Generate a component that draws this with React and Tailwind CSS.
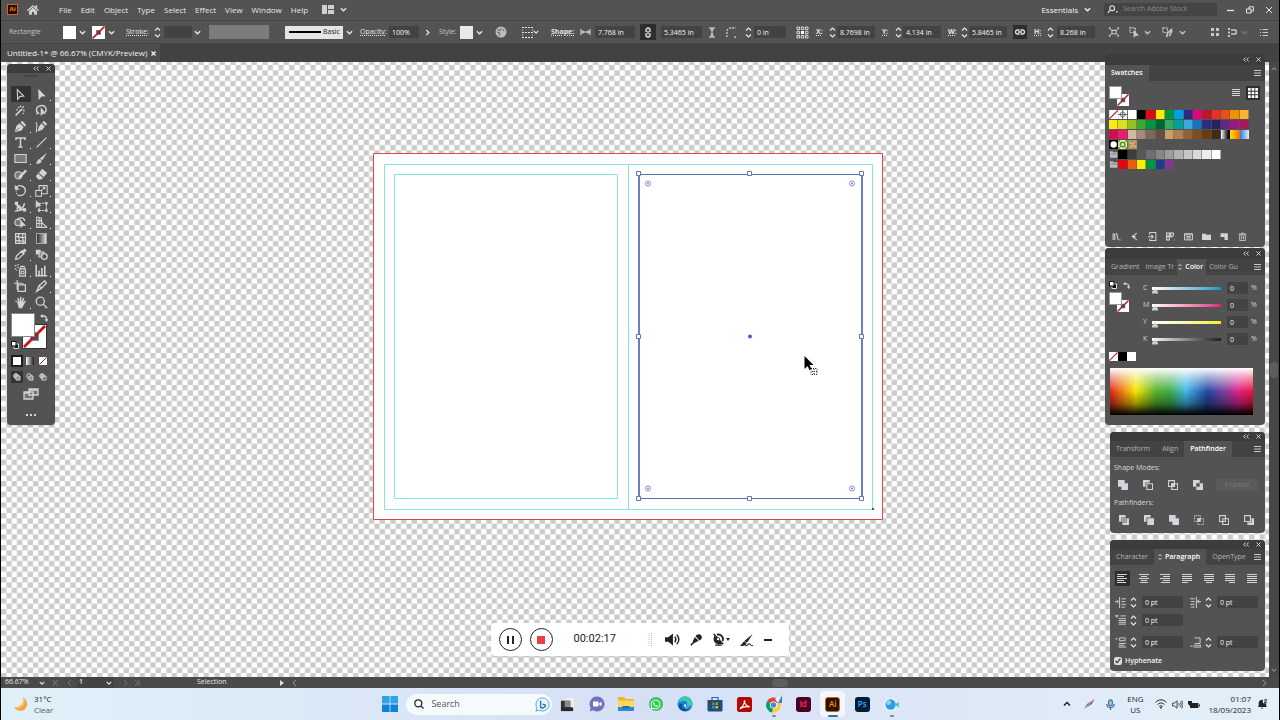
import clsx from "clsx";
import { FaWhatsapp, FaHome } from "react-icons/fa";

const MENUS = ["File", "Edit", "Object", "Type", "Select", "Effect", "View", "Window", "Help"];

function Ico({ children, className = "size-3", box = "0 0 16 16" }) {
  return (
    <svg
      viewBox={box}
      className={clsx("shrink-0", className)}
      fill="none"
      stroke="currentColor"
      strokeWidth="1.3"
      aria-hidden="true"
    >
      {children}
    </svg>
  );
}

function Chevron({ className = "size-[7px]" }) {
  return (
    <Ico className={className} box="0 0 8 8">
      <path d="M1 2.5 4 5.5 7 2.5" strokeWidth="1.5" />
    </Ico>
  );
}

function Stepper({ label }) {
  return (
    <button type="button" aria-label={label} className="flex w-[9px] shrink-0 justify-center text-gray-200">
      <Ico className="h-[11px] w-[7px]" box="0 0 7 11">
        <path d="M1 3.5 3.5 1 6 3.5M1 7.5 3.5 10 6 7.5" strokeWidth="1.2" />
      </Ico>
    </button>
  );
}

function Field({ label, value, className }) {
  return (
    <input
      aria-label={label}
      defaultValue={value}
      className={clsx("h-3 min-w-0 shrink-0 bg-[#434343] pl-[3px] text-[7px] text-gray-100 outline-none", className)}
    />
  );
}

function NoneSwatch({ className, hole = true }) {
  return (
    <svg viewBox="0 0 24 24" className={clsx("shrink-0", className)} aria-hidden="true">
      <rect width="24" height="24" fill="#fff" />
      <path d="M1 23 23 1" stroke="#c4161c" strokeWidth="3" />
      {hole && (
        <>
          <rect x="8" y="8" width="8" height="8" fill="#5a4646" stroke="#777" />
          <path d="M8 16 16 8" stroke="#c4161c" strokeWidth="2" />
        </>
      )}
    </svg>
  );
}

/* ---------- top bars ---------- */

function MenuBar() {
  return (
    <header className="flex h-5 items-center bg-[#535353] pb-[1px] text-[8px] text-gray-200">
      <span className="ml-[6px] grid size-[11px] place-items-center border border-[#c8692a] bg-[#2a0f00] text-[6px] font-bold text-[#ff8a1c]">
        Ai
      </span>
      <button type="button" aria-label="Home" className="ml-[9px] text-[#d0d0d0]">
        <FaHome className="size-3" />
      </button>
      <nav className="ml-5 flex gap-[9px]">
        {MENUS.map((m) => (
          <button type="button" key={m}>{m}</button>
        ))}
      </nav>
      <button type="button" aria-label="Arrange documents" className="ml-[14px] flex items-center gap-[6px]">
        <svg viewBox="0 0 12 9" className="h-[9px] w-3" fill="#d0d0d0" aria-hidden="true">
          <path d="M0 0h5v9H0zM6 0h6v4H6zM6 5h6v4H6z" />
        </svg>
        <Chevron />
      </button>
      <div className="ml-auto flex items-center">
        <button type="button" className="flex items-center gap-[6px] text-gray-100">
          Essentials <Chevron />
        </button>
        <label className="ml-[13px] flex h-[13px] w-[113px] items-center gap-1 bg-[#444] pl-[3px]">
          <Ico className="h-[9px] w-3" box="0 0 14 10">
            <circle cx="6" cy="3.5" r="2.8" />
            <path d="M4 5.5 1 9" />
            <path d="M10 7h3l-1.5 2z" fill="currentColor" stroke="none" />
          </Ico>
          <input
            placeholder="Search Adobe Stock"
            aria-label="Search Adobe Stock"
            className="min-w-0 flex-1 bg-transparent text-[7px] outline-none placeholder:text-[#8a8a8a]"
          />
        </label>
        <div className="ml-[10px] mr-[6px] flex items-center gap-[11px]">
          <button type="button" aria-label="Minimize">
            <Ico className="size-[8px]" box="0 0 8 8"><path d="M0 4.5h7" /></Ico>
          </button>
          <button type="button" aria-label="Restore">
            <Ico className="size-[8px]" box="0 0 8 8">
              <path d="M.5 3h4.5v4H.5zM3 3V.8h4.4V5H5" strokeWidth="1" />
            </Ico>
          </button>
          <button type="button" aria-label="Close">
            <Ico className="size-[8px]" box="0 0 8 8"><path d="m1 1 6 6M7 1 1 7" strokeWidth="1" /></Ico>
          </button>
        </div>
      </div>
    </header>
  );
}

function LinkIcon({ flat }) {
  return (
    <Ico className={flat ? "h-[6px] w-[10px]" : "h-[11px] w-[6px]"} box={flat ? "0 0 10 6" : "0 0 6 11"}>
      {flat ? (
        <path d="M4.5 1H2.5a2 2 0 0 0 0 4h2M5.5 1h2a2 2 0 0 1 0 4h-2M3 3h4" />
      ) : (
        <path d="M1 5V3a2 2 0 0 1 4 0v2M1 6v2a2 2 0 0 0 4 0V6M3 3.5v4" />
      )}
    </Ico>
  );
}

const COORDS = [
  ["X:", "8.7698 in"],
  ["Y:", "4.134 in"],
  ["W:", "5.8465 in"],
];

function ControlBar() {
  return (
    <div className="flex h-6 items-center overflow-hidden border-y border-[#434343] bg-[#535353] text-[7px] text-gray-200">
      <span className="w-[54px] shrink-0 pl-2 text-[#c4c4c4]">Rectangle</span>
      <button type="button" aria-label="Fill" className="ml-2 flex shrink-0 items-center gap-[3px]">
        <span className="size-[13px] bg-white" />
        <Chevron />
      </button>
      <button type="button" aria-label="Stroke colour" className="ml-[6px] flex shrink-0 items-center gap-[3px]">
        <NoneSwatch className="size-[13px]" />
        <Chevron />
      </button>
      <div className="ml-[11px] flex shrink-0 items-center">
        <span className="w-[27px] underline decoration-dotted">Stroke:</span>
        <Stepper label="Stroke step" />
        <Field label="Stroke weight" value="" className="mx-[2px] w-7" />
        <Chevron />
      </div>
      <span className="ml-2 h-[14px] w-[60px] shrink-0 bg-[#7c7c7c]" />
      <button type="button" className="ml-4 flex shrink-0 items-center gap-[3px]">
        <span className="flex h-[13px] w-[58px] items-center gap-[2px] bg-[#e4e4e4] pl-1 text-[#222]">
          <span className="h-[2px] w-8 bg-black" />
          Basic
        </span>
        <Chevron />
      </button>
      <div className="ml-[7px] flex shrink-0 items-center">
        <span className="w-[29px] underline decoration-dotted">Opacity:</span>
        <Field label="Opacity" value="100%" className="w-[30px]" />
        <button type="button" aria-label="Opacity options" className="ml-[5px] -rotate-90">
          <Chevron />
        </button>
      </div>
      <button type="button" className="ml-2 flex shrink-0 items-center gap-[3px]">
        <span className="w-[18px] text-left text-[#c4c4c4]">Style:</span>
        <span className="size-[13px] bg-[#e8e8e8]" />
        <Chevron />
      </button>
      <button type="button" aria-label="Recolor artwork" className="ml-[12px] shrink-0">
        <Ico className="size-[12px]" box="0 0 12 12">
          <circle cx="6" cy="6" r="5.5" fill="#bdbdbd" stroke="none" />
          <path d="M2 3l3 2 1-3M2 6l3 1-1 3" stroke="#5b5b5b" strokeWidth=".9" />
          <circle cx="8.5" cy="4" r="1" fill="#777" stroke="none" />
        </Ico>
      </button>
      <button type="button" aria-label="Align" className="ml-[15px] flex shrink-0 items-center">
        <Ico className="size-[11px]" box="0 0 11 11">
          <path d="M0 .5h11M0 5.5h11M0 10.5h11" strokeDasharray="2 1" strokeWidth="1" />
          <path d="M.5 0v11M10.500 0v11" strokeDasharray="1 1.500" strokeWidth="1" />
        </Ico>
        <Chevron className="size-[6px]" />
      </button>
      <div className="ml-[12px] flex shrink-0 items-center">
        <span className="w-[29px] font-bold underline decoration-dotted">Shape:</span>
        <Ico className="mr-1 h-2 w-[11px]" box="0 0 11 8">
          <path d="M1 1v6M10 1v6M1 4h9M3 2.500v3M8 2.500v3" strokeWidth="1" />
        </Ico>
        <Field label="Shape width" value="7.768 in" className="w-10" />
        <button type="button" aria-label="Link shape size" className="mx-[5px] grid size-4 place-items-center bg-[#2e2e2e]">
          <LinkIcon />
        </button>
        <Field label="Shape height" value="5.3465 in" className="w-[41px]" />
      </div>
      <Ico className="ml-[6px] h-[11px] w-[8px]" box="0 0 8 11">
        <path d="M1 1h6M1 10h6M4 1v9M2.5 3h3M2.5 8h3" strokeWidth="1" />
      </Ico>
      <Ico className="ml-[10px] size-[11px]" box="0 0 12 12">
        <path d="M1 11V5a4 4 0 0 1 4-4h6M11 11h-2" strokeDasharray="2 1.5" strokeWidth="1.2" />
      </Ico>
      <div className="ml-[7px] flex shrink-0 items-center">
        <Stepper label="Corner radius step" />
        <Field label="Corner radius" value="0 in" className="ml-[1px] w-8" />
      </div>
      <Ico className="ml-[10px] size-[13px]" box="0 0 13 13">
        <path d="M1 1h2.5v2.5H1zM5.3 1h2.5v2.5H5.3zM9.5 1H12v2.5H9.5zM1 5.3h2.5v2.5H1zM9.5 5.3H12v2.5H9.5zM1 9.5h2.5V12H1zM5.3 9.5h2.5V12H5.3zM9.5 9.5H12V12H9.5z" strokeWidth=".9" />
        <path d="M5 5h3v3H5z" fill="#fff" stroke="none" />
      </Ico>
      {COORDS.map(([name, value]) => (
        <div key={name} className="ml-[7px] flex shrink-0 items-center">
          <span className="w-3 font-bold underline decoration-dotted">{name}</span>
          <Stepper label={`${name} step`} />
          <Field label={name} value={value} className="w-[38px]" />
        </div>
      ))}
      <button type="button" aria-label="Constrain proportions" className="ml-[6px] grid size-[14px] shrink-0 place-items-center bg-[#2e2e2e]">
        <LinkIcon flat />
      </button>
      <div className="ml-[7px] flex shrink-0 items-center">
        <span className="w-3 font-bold underline decoration-dotted">H:</span>
        <Stepper label="H step" />
        <Field label="H" value="8.268 in" className="ml-[2px] w-[38px]" />
      </div>
      <div className="ml-auto mr-[11px] flex shrink-0 items-center text-[#c8c8c8]">
        <Ico className="size-[10px]" box="0 0 12 12">
          <path d="M3.5 4h5v4h-5z" />
          <path d="M0 1l3.5 3M12 1 8.5 4M0 11l3.5-3M12 11 8.5 8" strokeWidth="1.2" />
          <path d="M0 3V1h2M12 3V1h-2M0 9v2h2M12 9v2h-2" strokeWidth="1.2" />
        </Ico>
        <div className="ml-[10px] flex items-center gap-1">
          <Ico className="size-[11px]" box="0 0 12 12">
            <path d="M1 1h6v5H1z" strokeDasharray="2 1" />
            <path d="M5 3v9l2.500-2.500H11z" fill="currentColor" stroke="none" />
          </Ico>
          <Chevron />
        </div>
        <div className="ml-[11px] flex items-center gap-[6px]">
          <Ico className="size-[11px]" box="0 0 12 12">
            <path d="M1 1h5v5H1z" strokeDasharray="2 1" />
            <path d="m5 11 1-4 5-5M8 10l3-6" strokeWidth="1.8" />
          </Ico>
          <Chevron />
        </div>
        <svg viewBox="0 0 8 8" className="ml-[25px] size-2" fill="currentColor" aria-hidden="true">
          <path d="M0 0h3v3H0zM5 0h3v3H5zM0 5h3v3H0zM5 5h3v3H5z" />
        </svg>
        <div className="ml-[9px] flex items-center gap-1">
          <Ico className="size-[9px]" box="0 0 9 9">
            <path d="M1 0v2M1 3.500v2M1 7v2" strokeWidth="2" />
            <path d="M3 2h3.500a2 2 0 0 1 0 4H3" strokeWidth="1.500" />
          </Ico>
          <Chevron className="size-[7px] text-[#777]" />
        </div>
        <Ico className="ml-3 size-2" box="0 0 8 8">
          <path d="M2.5 1.500H8M2.5 4.500H8M2.5 7.500H8M0 1.500h1M0 4.500h1M0 7.500h1" strokeWidth="1" />
        </Ico>
      </div>
    </div>
  );
}

function TabBar() {
  return (
    <div className="flex h-[18px] bg-[#424242] text-[8px] text-gray-100">
      <div className="flex w-[159px] items-center justify-between bg-[#4d4d4d] pl-[6px] pr-1">
        Untitled-1* @ 66.67% (CMYK/Preview)
        <button type="button" aria-label="Close document">
          <Ico className="size-[5px]" box="0 0 5 5"><path d="m.5.5 4 4M4.5.5l-4 4" /></Ico>
        </button>
      </div>
    </div>
  );
}

/* ---------- tool box ---------- */

const F = { fill: "currentColor", stroke: "none" };

const TOOLS = [
  ["Selection", <path key="a" d="m4 2 8 8-4.5.3L4.5 14z" />],
  ["Direct selection", <path key="a" {...F} d="m4 1 9 9-5 .5L4.5 15z" />],
  ["Magic wand", <path key="a" d="m2 14 8-8M8 2v2M12 3l-1.5 1.5M13 8h-2M5 4l1 1M12 12l-1-1M3 7h1.5" strokeWidth="1.9" />],
  ["Lasso", <g key="a"><path d="M5 12C0 9 1 3 7 2s8 4 6 8M5 12c-1-2-3-1-3 1" strokeWidth="1.7" /><path {...F} d="m7 4 7 8-4 0-3 3z" /></g>],
  ["Pen", <g key="a"><path {...F} d="M10 1 15 6l-2 2-5-5zM7 4l5 5-3 4-8 2 2-8z" /><path d="m2 14 4-4" stroke="#535353" strokeWidth="1" /></g>],
  ["Curvature", <g key="a"><path {...F} d="M11 1 15 5l-2 2-4-4zM8 4l4 4-3 4-6 2 2-6z" /><path d="M1 3c4 3-1 8 1 12" /></g>],
  ["Type", <path key="a" d="M2.5 5V2.500h11V5M8 2.500v11M5.500 13.500h5" strokeWidth="1.900" />],
  ["Line", <path key="a" d="M2 14 14 2" strokeWidth="1.600" />],
  ["Rectangle", <path key="a" d="M1 3h14v10H1z" fill="#7a7a7a" />],
  ["Paintbrush", <path key="a" {...F} d="M15 1 8.500 10.500 6 8zM5.500 8.500 8 11c0 3-4 4-7 3 2-1 1.500-5 4.500-5.500z" />],
  ["Shaper", <g key="a"><circle cx="5.5" cy="9" r="4.5" fill="#777" /><path d="m6 12 9-9" strokeWidth="3" /></g>],
  ["Eraser", <g key="a"><path {...F} d="m9 1 6 5-7 8H4L1 10z" /><path d="m4.5 6.500 5.500 5" stroke="#535353" /></g>],
  ["Rotate", <g key="a"><path d="M3 4c4-4 11-1 11 4s-5 7-8 6" strokeWidth="1.600" /><path d="M6 14c-3-1-4-4-3-6" strokeDasharray="1.500 1.500" /><path {...F} d="M1 1v6h6z" /></g>],
  ["Scale", <path key="a" d="M1 8h7v7H1zM5 8V2h10v10H8M8 8l4-4M9.500 4H12v2.500" />],
  ["Width", <g key="a"><path d="M1 14 14 11M2 4l6 8M4 12c0-6 3-6 4-3s4 0 5-5" strokeWidth="1.800" /><path {...F} d="M1 2h4v4H1zM11 10h4v4h-4z" /></g>],
  ["Free transform", <g key="a"><path d="M5 4h9v9H5z" strokeDasharray="2.500 1" /><path {...F} d="m1 0 7 7-4 0-3 3zM12.500 2.500h3v3h-3zM12.500 11.500h3v3h-3zM3.500 11.500h3v3h-3z" /></g>],
  ["Shape builder", <g key="a"><circle cx="5" cy="8" r="4" fill="#777" /><path d="M4 4c2-3 9-2 9 2" strokeWidth="1.600" /><path {...F} d="m8 5 7 7-4 0-3 3z" /></g>],
  ["Perspective grid", <path key="a" d="M2 1v13h13M2 1l6 2v11M5 2v12M2 5l7 1M2 9l9 1M8 8l7 6" />],
  ["Mesh", <path key="a" d="M2 2h12v12H2zM2 6c4-2 8 3 12 0M2 11c4-2 8 2 12 0M6 2c-2 4 2 8 0 12M11 2c-2 4 2 8 0 12" strokeWidth="1.500" />],
  ["Gradient", "gradient"],
  ["Eyedropper", <g key="a"><path d="M2 14 3 10l6-6 3 3-6 6z" strokeWidth="1.500" /><path {...F} d="m9 3 1.500 0L13 .5 15.500 3 13 5.500V7l-1 1-4-4z" /></g>],
  ["Blend", <g key="a"><path {...F} d="M1 2h6v6H1z" /><path d="M5 5h6v6H5z" fill="#888" /><circle cx="11.5" cy="10.500" r="3.500" fill="#535353" strokeWidth="1.600" /></g>],
  ["Symbol sprayer", <g key="a"><path d="M7 6h7v9H7zM8.500 6V3h4v3" strokeWidth="1.500" /><circle cx="10.5" cy="10.500" r="1.800" /><path d="M1 2h2M4 4h2M1 6h2M4 1h2M3 8h1" /></g>],
  ["Column graph", <path key="a" d="M1.500 1v13.500H15M5 14V8M8.500 14V5M12 14V2" strokeWidth="2" />],
  ["Artboard", <path key="a" d="M4 0v12M0 4h10M5 6h9v8H5zM11 4v2" strokeWidth="1.500" />],
  ["Slice", <path key="a" d="m2 14 3-7 7-6 2 3-6 6zM5 7l3 3" strokeWidth="1.600" />],
  ["Hand", <path key="a" {...F} d="M4 8 1 6.500 2.500 5.500 5 8 4 2.500l1.500-.5 1.500 5L7.500 1H9l.500 6 1.500-5 1.500.5L11.500 8l2-2.500 1.200.7L11 13l-1 2H6z" />],
  ["Zoom", <path key="a" d="M10.500 10.500 15 15M11.500 6.500a5 5 0 1 1-10 0 5 5 0 0 1 10 0z" strokeWidth="1.600" />],
];

const NO_FLYOUT = ["Selection", "Magic wand", "Lasso", "Curvature", "Mesh", "Gradient", "Blend", "Artboard", "Zoom"];

function PanelGrip({ tall }) {
  return (
    <div className={clsx("flex items-center justify-end gap-[7px] bg-[#3c3c3c] pr-1 text-gray-300", tall ? "h-[11px]" : "h-[9px]")}>
      <button type="button" aria-label="Collapse">
        <Ico className="h-[5px] w-[6px]" box="0 0 6 5">
          <path d="M2.5.5.8 2.500l1.700 2M5.500.5 3.800 2.500l1.700 2" strokeWidth="1" />
        </Ico>
      </button>
      <button type="button" aria-label="Close panel">
        <Ico className="size-[5px]" box="0 0 5 5"><path d="m.5.5 4 4M4.500.5l-4 4" strokeWidth="1" /></Ico>
      </button>
    </div>
  );
}

function SwapIcon({ className = "size-2" }) {
  return (
    <Ico className={className} box="0 0 8 8">
      <path d="M2 2h1.500c2 0 3 1 3 3v1" />
      <path {...F} d="M0 2 2.800 0v4zM6.500 8 4.500 5.200h4z" />
    </Ico>
  );
}

function DefaultIcon() {
  return (
    <svg viewBox="0 0 8 8" className="size-2" aria-hidden="true">
      <path d="M3 3h4.500v4.500H3z" fill="#111" stroke="#ddd" />
      <path d="M.5.5H5V5H.5z" fill="#fff" stroke="#111" />
    </svg>
  );
}

function ToolBox() {
  return (
    <aside className="absolute left-[6px] top-[2px] w-12 overflow-hidden rounded-sm bg-[#535353] pb-[6px] text-[#d4d4d4] shadow-sm">
      <PanelGrip />
      <div className="mx-auto mt-[2px] h-[2px] w-3 bg-[#454545]" />
      <div className="mt-[9px] grid grid-cols-2 gap-x-[1px] px-1">
        {TOOLS.map(([name, art], i) => (
          <button
            type="button"
            key={name}
            aria-label={name}
            className={clsx("relative grid h-4 place-items-center", i === 0 && "bg-[#333]")}
          >
            {art === "gradient" ? (
              <span className="size-[11px] border border-[#aaa] bg-linear-to-r from-[#333] to-[#ddd]" />
            ) : (
              <Ico className="size-[13px]">{art}</Ico>
            )}
            {!NO_FLYOUT.includes(name) && <span className="absolute bottom-[1px] right-0 size-[1px] bg-white" />}
          </button>
        ))}
      </div>
      <div className="relative mx-1 mt-[3px] h-9">
        <NoneSwatch className="absolute left-3 top-[12px] size-[23px] ring-1 ring-[#333]" />
        <button type="button" aria-label="Fill colour" className="absolute left-0 top-0 size-6 border border-[#888] bg-white" />
        <button type="button" aria-label="Swap fill and stroke" className="absolute left-[29px] top-[1px]">
          <SwapIcon />
        </button>
        <button type="button" aria-label="Default fill and stroke" className="absolute bottom-0 left-0">
          <DefaultIcon />
        </button>
      </div>
      <div className="mx-1 mt-[6px] flex gap-[1px]">
        <button type="button" aria-label="Color" className="grid size-3 place-items-center bg-[#1d1d1d]">
          <span className="size-2 bg-white" />
        </button>
        <button type="button" aria-label="Gradient fill" className="grid size-3 place-items-center">
          <span className="size-2 bg-linear-to-r from-white to-[#222]" />
        </button>
        <button type="button" aria-label="None" className="grid size-3 place-items-center">
          <NoneSwatch className="size-2" hole={false} />
        </button>
      </div>
      <div className="mx-1 mt-1 flex gap-[1px]">
        {["Draw normal", "Draw behind", "Draw inside"].map((name, i) => (
          <button key={name} type="button" aria-label={name} className={clsx("grid size-3 place-items-center", i === 0 && "bg-[#333]")}>
            <Ico className="size-2" box="0 0 8 8">
              <circle cx="3" cy="3" r="2.3" fill={i === 1 ? "none" : "#aaa"} strokeWidth="1" />
              <path d="M3 3h4v4H3z" fill={i === 2 ? "none" : "#888"} strokeWidth="1" />
            </Ico>
          </button>
        ))}
      </div>
      <button type="button" aria-label="Screen mode" className="mx-auto mt-[5px] block">
        <Ico className="h-3 w-4" box="0 0 16 12">
          <path d="M1 4h9v7H1zM6 1h9v6H6z" fill="#777" />
          <path d="M1 5h6M6 2h9" />
        </Ico>
      </button>
      <button type="button" aria-label="Edit toolbar" className="mx-auto mt-[11px] flex h-2 items-center gap-[2px]">
        <span className="size-[2px] bg-gray-300" />
        <span className="size-[2px] bg-gray-300" />
        <span className="size-[2px] bg-gray-300" />
      </button>
    </aside>
  );
}

/* ---------- canvas ---------- */

function Checker() {
  return (
    <svg className="absolute inset-0 size-full" aria-hidden="true">
      <defs>
        <pattern id="checker" width="10.667" height="10.667" patternUnits="userSpaceOnUse" x="0" y="3">
          <rect width="10.667" height="10.667" fill="#fff" />
          <path d="M0 0h5.333v5.333H0zM5.333 5.333h5.334v5.334H5.333z" fill="#cbcbcb" />
        </pattern>
      </defs>
      <rect width="100%" height="100%" fill="url(#checker)" />
    </svg>
  );
}

const HANDLES = [
  [266, 20], [377, 20], [489, 20],
  [266, 183], [489, 183],
  [266, 345], [377, 345], [489, 345],
];
const CORNERS = [[275, 31], [479, 31], [275, 336], [479, 336]];

function Artboard() {
  return (
    <svg viewBox="0 0 512 368" className="absolute left-[372px] top-[91px] h-[368px] w-[512px]" fill="none" aria-label="Artboard">
      <path d="M.5.5h509.500v366.500H.5z" fill="#fff" stroke="none" />
      <path d="M.5.5h509v366H.5z" stroke="#e2434d" />
      <path d="M11.500 11.500h488v345h-488zM255.500 11.500v345M21.500 21.500h223v324h-223z" stroke="#86e6dc" />
      <path d="M499 355h2v2h-2z" fill="#555" />
      <path d="M266 21.500h223v324H266z" stroke="#5470b4" />
      <path d="M266 21v325M489 21v325" stroke="#5470b4" strokeWidth="1.500" />
      {HANDLES.map(([x, y]) => (
        <path key={`${x}-${y}`} d={`M${x - 2.5} ${y - 1.5}h4v4h-4z`} fill="#fff" stroke="#6376ad" />
      ))}
      {CORNERS.map(([x, y]) => (
        <g key={`${x}-${y}`} stroke="#6a7cc0">
          <circle cx={x} cy={y - 0.5} r="2.600" strokeWidth=".8" />
          <circle cx={x} cy={y - 0.5} r="1" fill="#6a7cc0" stroke="none" />
        </g>
      ))}
      <circle cx="377" cy="183.500" r="2" fill="#3f66c4" />
      <path d="M431.500 203v13l3-3 2 4 2-1-2-4h4z" fill="#000" />
      <path d="M438 215.500h6v6h-6z" stroke="#333" strokeDasharray="1 1" />
      <path d="M439 218.500h5M441 216v5" stroke="#333" strokeDasharray="1 1" />
    </svg>
  );
}

function Recorder() {
  return (
    <div className="absolute inset-x-0 bottom-[21px] flex justify-center pl-[9px]">
      <div className="flex h-[33px] w-[298px] items-center rounded-sm bg-white pl-2 pr-[17px] text-[#222] shadow">
        <button type="button" aria-label="Pause" className="grid size-[23px] place-items-center rounded-full border border-[#222]">
          <span className="flex gap-[3px]">
            <span className="h-2 w-[2px] bg-[#222]" />
            <span className="h-2 w-[2px] bg-[#222]" />
          </span>
        </button>
        <button type="button" aria-label="Stop" className="ml-2 grid size-[23px] place-items-center rounded-full border border-[#222]">
          <span className="size-2 bg-[#e8423f]" />
        </button>
        <time className="ml-[21px] font-[Roboto,sans-serif] text-[11px]">00:02:17</time>
        <svg viewBox="0 0 6 14" className="ml-auto h-[14px] w-[6px]" aria-hidden="true">
          <path d="M1 0v14M3.500 0v14" stroke="#a9cbdc" strokeDasharray="1 1" />
        </svg>
        <div className="ml-[11px] flex items-center gap-[10px]">
          <button type="button" aria-label="Speaker">
            <Ico className="size-[15px]">
              <path {...F} d="M0 5.500h3.500L8.500 1.500v13L3.500 10.500H0z" />
              <path d="M10.500 5c1.500 2 1.500 4 0 6M12.500 3c3 3 3 7 0 10" strokeWidth="1.500" />
            </Ico>
          </button>
          <button type="button" aria-label="Microphone">
            <Ico className="size-[12px]">
              <path {...F} d="M7.500 3C9 0 13-.5 15 2s0 6-2.500 6.500zM6.500 4l5 5-5.500 3L3.500 9.500z" />
              <path d="m5.500 10.500-4.500 4.500" strokeWidth="2" />
            </Ico>
          </button>
          <button type="button" aria-label="Webcam" className="flex items-center gap-[1px]">
            <Ico className="size-[13px]">
              <path {...F} d="M3 3 13 13c-5 3-12-1-11-7z" />
              <path d="M6 2c5-1 9 3 7 8" strokeWidth="2.200" />
              <path d="M2 1 14 14M4 15h8" strokeWidth="1.600" />
              <circle cx="7.500" cy="7.500" r="2" fill="#fff" strokeWidth="1" />
            </Ico>
            <svg viewBox="0 0 4 3" className="h-[3px] w-1" fill="#222" aria-hidden="true"><path d="M0 0h4L2 3z" /></svg>
          </button>
          <button type="button" aria-label="Draw">
            <Ico className="size-[14px]">
              <path {...F} d="M14.500 1 8 11 5 9zM5 9.500 7.500 12C6 15 3 15 0 14.500c2-1 3-4 5-5z" />
              <path d="M6 14.500c3 1 3-3 5-2s0 2 4 2" strokeWidth="1.200" />
            </Ico>
          </button>
          <button type="button" aria-label="Minimize recorder" className="grid h-4 w-2 place-items-center">
            <span className="h-[2px] w-2 bg-[#222]" />
          </button>
        </div>
      </div>
    </div>
  );
}

/* ---------- right panels ---------- */

function Panel({ tabs, active, tall, tight, className, children }) {
  return (
    <section className={clsx("overflow-hidden rounded-sm bg-[#535353] text-[7px] text-gray-300", className)}>
      <PanelGrip tall={tall} />
      <div className={clsx("flex h-4 items-stretch bg-[#434343]", tight && "pl-[3px]")} role="tablist">
        {tabs.map((t) => (
          <button
            type="button"
            role="tab"
            key={t}
            aria-selected={t === active}
            className={clsx(
              "flex items-center overflow-hidden whitespace-nowrap",
              tight ? "px-[3px]" : "px-[6px]",
              t === active ? "gap-[3px] bg-[#535353] font-semibold text-white" : "text-[#b4b4b4]",
            )}
          >
            {t === active && (t === "Color" || t === "Paragraph") && (
              <Ico className="-ml-[2px] h-[6px] w-1" box="0 0 4 6">
                <path d="M.5 2 2 .5 3.500 2M.5 4 2 5.500 3.500 4" strokeWidth=".8" />
              </Ico>
            )}
            {t}
          </button>
        ))}
        <button type="button" aria-label="Panel menu" className="ml-auto mr-1">
          <Ico className="h-[6px] w-[7px]" box="0 0 7 6"><path d="M0 .5h7M0 3h7M0 5.500h7" strokeWidth=".9" /></Ico>
        </button>
      </div>
      {children}
    </section>
  );
}

function FillStroke() {
  return (
    <div className="relative size-5">
      <NoneSwatch className="absolute bottom-0 right-0 size-3" />
      <span className="absolute left-0 top-0 size-[13px] border border-[#999] bg-white" />
    </div>
  );
}

const SWATCHES = [
  "#ffffff", "#000000", "#e30613", "#ffed00", "#00963f", "#00a0e3", "#312783", "#e6007e", "#be1622", "#e5332a", "#e94e1b", "#f39200", "#f9b233",
  "#fcea10", "#d9e021", "#95c11f", "#3aaa35", "#009640", "#006633", "#2fac66", "#00a19a", "#36a9e1", "#1d71b8", "#2d2e83", "#29235c", "#662483", "#951b81", "#a3195b",
  "#d60b52", "#e71d73", "#cbbba0", "#a48a7b", "#7b6a58", "#634e42", "#ca9e67", "#b17f4a", "#936037", "#7d4e24", "#683c11", "#432918",
];
const GREYS = ["#000000", "#3c3c3b", "#575756", "#706f6f", "#878787", "#9d9d9c", "#b2b2b2", "#c6c6c6", "#dadada", "#ededed", "#ffffff"];
const BRIGHTS = ["#e30613", "#e95d0f", "#ffed00", "#009640", "#24388e", "#7d3a90"];

function Swatch({ color }) {
  return (
    <button type="button" aria-label={`Swatch ${color}`} className="h-[9px] border-r border-[#535353]/50" style={{ background: color }} />
  );
}

function Folder() {
  return (
    <svg viewBox="0 0 10 9" className="h-[9px] w-full" fill="#b8bcc0" aria-hidden="true">
      <path d="M1 1h3l1 1h4v6H1z" />
      <path d="M2 4h6" stroke="#777" />
    </svg>
  );
}

const FOOTER = [
  ["Libraries", <path key="a" d="M2 2v12M5 2v12M8 2l3 12M13 14h2" strokeWidth="1.900" />],
  ["Share", <path key="a" d="M12 2 4 8l8 6M8 5v6M5 8h5" strokeWidth="1.900" />],
  ["Add to library", <path key="a" d="M3 5V1h11v14H3v-3M0 8.500h8M6 5l3 3.500L6 12" strokeWidth="1.800" />],
  ["Swatch kinds", <path key="a" d="M1 2h5v5H1zM8 2h5v5H8zM1 9h5v5H1zM8 9h3M14 14h1" strokeWidth="1.800" />],
  ["Options", <path key="a" d="M1 3h14v11H1zM1 5h14M5 8h6v3H5z" strokeWidth="1.700" />],
  ["New group", <path key="a" {...F} d="M0 3h6l2 2h8v9H0z" />],
  ["New swatch", <path key="a" {...F} d="M1 2h13v12H8V9H1z" />],
  ["Delete", <path key="a" d="M3 5h10v10H3zM1 3.500h14M6 2h4M6.500 7v6M9.500 7v6" strokeWidth="1.500" />],
];

function SwatchesPanel() {
  return (
    <Panel tabs={["Swatches"]} active="Swatches" tall className="w-[160px] pb-[6px]">
      <div className="flex items-start justify-between pl-1 pr-[5px] pt-[5px]">
        <FillStroke />
        <div className="flex items-center gap-[3px]">
          <button type="button" aria-label="List view" className="grid size-[14px] place-items-center">
            <Ico className="size-2" box="0 0 8 8"><path d="M0 .5h8M0 2.500h8M0 4.500h8M0 6.500h8" strokeWidth="1" /></Ico>
          </button>
          <button type="button" aria-label="Thumbnail view" className="grid size-[14px] place-items-center bg-[#2e2e2e]">
            <svg viewBox="0 0 11 11" className="size-[10px]" fill="#fff" aria-hidden="true">
              <path d="M0 0h3v3H0zM4 0h3v3H4zM8 0h3v3H8zM0 4h3v3H0zM4 4h3v3H4zM8 4h3v3H8zM0 8h3v3H0zM4 8h3v3H4zM8 8h3v3H8z" />
            </svg>
          </button>
        </div>
      </div>
      <div className="ml-1 mt-1 grid w-[140px] grid-cols-15 gap-y-[1px]">
        <NoneSwatch className="h-[9px] w-full" hole={false} />
        <svg viewBox="0 0 9 9" className="h-[9px] w-full" aria-hidden="true">
          <path d="M0 0h9v9H0z" fill="#fff" />
          <circle cx="4.500" cy="4.500" r="2.500" stroke="#444" strokeWidth=".7" fill="none" />
          <path d="M4.500 0v9M0 4.500h9" stroke="#444" strokeWidth=".8" fill="none" />
        </svg>
        {SWATCHES.map((c) => (
          <Swatch key={c} color={c} />
        ))}
        <span className="h-[9px] bg-linear-to-r from-white to-black" />
        <span className="h-[9px] bg-linear-to-r from-[#ffe000] to-[#ee6a00]" />
        <span className="h-[9px] bg-linear-to-r from-[#2b7fd0] to-[#dceefb]" />
        <svg viewBox="0 0 9 9" className="h-[9px] w-full" aria-hidden="true">
          <path d="M0 0h9v9H0z" />
          <circle cx="4.500" cy="4.500" r="3.200" fill="#fff" />
        </svg>
        <svg viewBox="0 0 9 9" className="h-[9px] w-full" aria-hidden="true">
          <path d="M0 0h9v9H0z" fill="#e7efb8" />
          <circle cx="4.500" cy="4.500" r="2.300" fill="none" stroke="#4e9a2c" strokeWidth="1.600" />
          <path d="M0 0h2v2H0zM7 0h2v2H7zM0 7h2v2H0zM7 7h2v2H7z" fill="#6fae34" />
        </svg>
        <svg viewBox="0 0 9 9" className="h-[9px] w-full" aria-hidden="true">
          <path d="M0 0h9v9H0z" fill="#b98d5f" />
          <path d="M1 2l3 2 3-3M2 8l2-3 4 2" stroke="#e6c99a" fill="none" />
        </svg>
        <span className="col-span-12" />
        <Folder />
        {GREYS.map((c) => (
          <Swatch key={c} color={c} />
        ))}
        <span className="col-span-3" />
        <Folder />
        {BRIGHTS.map((c) => (
          <Swatch key={c} color={c} />
        ))}
      </div>
      <div className="mx-[7px] mt-[63px] flex justify-between pr-[11px]">
        {FOOTER.map(([name, art]) => (
          <button type="button" key={name} aria-label={name}>
            <Ico className="size-[9px]">{art}</Ico>
          </button>
        ))}
      </div>
    </Panel>
  );
}

const INKS = [
  ["C", "to-[#0095c8]"],
  ["M", "to-[#d6247f]"],
  ["Y", "to-[#f5f000]"],
  ["K", "to-[#222]"],
];

function ColorPanel() {
  return (
    <Panel tabs={["Gradient", "Image Tr", "Color", "Color Gu"]} active="Color" tall tight className="w-[160px] pb-[10px]">
      <div className="flex pl-1 pr-2 pt-[6px]">
        <div className="w-[34px]">
          <div className="mb-[3px] flex items-center gap-[6px]">
            <button type="button" aria-label="Default colours"><DefaultIcon /></button>
            <button type="button" aria-label="Swap colours"><SwapIcon className="size-[7px]" /></button>
          </div>
          <FillStroke />
        </div>
        <div className="flex flex-1 flex-col gap-[3px]">
          {INKS.map(([ink, to]) => (
            <label key={ink} className="flex h-[14px] items-center">
              <span className="w-[9px]">{ink}</span>
              <input
                type="range"
                defaultValue="0"
                aria-label={ink}
                className={clsx(
                  "h-[10px] w-[69px] appearance-none bg-linear-to-r from-white bg-[length:100%_3px] bg-[position:0_4px] bg-no-repeat [&::-webkit-slider-thumb]:mt-[6px] [&::-webkit-slider-thumb]:h-[5px] [&::-webkit-slider-thumb]:w-[6px] [&::-webkit-slider-thumb]:appearance-none [&::-webkit-slider-thumb]:bg-[#ccc] [&::-webkit-slider-thumb]:[clip-path:polygon(50%_0,100%_60%,100%_100%,0_100%,0_60%)]",
                  to,
                )}
              />
              <Field label={`${ink} value`} value="0" className="ml-[6px] w-[21px]" />
              <span className="ml-[3px]">%</span>
            </label>
          ))}
        </div>
      </div>
      <div className="ml-1 mt-[6px] flex">
        <NoneSwatch className="size-[9px]" hole={false} />
        <span className="size-[9px] bg-black" />
        <span className="size-[9px] bg-white" />
      </div>
      <div className="ml-[5px] mr-3 mt-[7px] h-[47px] bg-[linear-gradient(90deg,#e3211d,#f5e500_18%,#57b02c_32%,#3fae49_42%,#3fb8e6_53%,#2447a5_68%,#7a3fa0_80%,#e0218a_90%,#ea1238)]">
        <div className="h-full bg-[linear-gradient(180deg,#fff,rgba(255,255,255,0.6)_18%,transparent_50%,rgba(0,0,0,0.35)_75%,#000)]" />
      </div>
    </Panel>
  );
}

const MODES = [
  ["Unite", <path key="a" {...F} d="M0 0h8v4h4v8H4V8H0z" />],
  ["Minus front", <g key="a"><path {...F} d="M0 0h8v3H3v5H0z" /><path d="M4.500 4.500h7v7h-7z" /></g>],
  ["Intersect", <g key="a"><path d="M.7.7h7v7h-7zM4.500 4.500h7v7h-7z" /><path {...F} d="M4 4h4v4H4z" /></g>],
  ["Exclude", <path key="a" {...F} fillRule="evenodd" d="M0 0h8v4h4v8H4V8H0zM4 4v4h4V4z" />],
];
const FINDERS = [
  ["Divide", <g key="a"><path {...F} d="M0 0h8v3H3v5H0zM9 4h3v8H4V9h5z" /><path d="M4.500 4.500h3v3h-3z" /></g>],
  ["Trim", <g key="a"><path {...F} d="M0 0h8v3H3v5H0zM4 4h8v8H4z" /></g>],
  ["Merge", <path key="a" {...F} d="M0 0h8v4h4v8H4V8H0z" />],
  ["Crop", <g key="a"><path d="M.7.7h7v7h-7zM4.500 4.500h7v7h-7z" strokeDasharray="1 1" /><path {...F} d="M4 4h4v4H4z" /></g>],
  ["Outline", <path key="a" d="M.7.7h7v7h-7zM4.500 4.500h7v7h-7z" />],
  ["Minus back", <g key="a"><path d="M.7.7h7v7h-7z" /><path {...F} d="M9 4h3v8H4V9h5z" /></g>],
];

function PathfinderPanel() {
  return (
    <Panel tabs={["Transform", "Align", "Pathfinder"]} active="Pathfinder" className="w-[155px] pb-[7px]">
      <div className="px-1 pt-[6px]">
        <h3 className="h-[10px] leading-[10px]">Shape Modes:</h3>
        <div className="mt-[5px] flex h-[14px] items-center pl-1">
          <div className="flex gap-[15px]">
            {MODES.map(([name, art]) => (
              <button type="button" key={name} aria-label={name}>
                <Ico className="size-[10px]" box="0 0 12 12">{art}</Ico>
              </button>
            ))}
          </div>
          <button type="button" disabled className="ml-auto mr-[3px] h-3 w-[42px] bg-[#5a5a5a] text-[#777]">Expand</button>
        </div>
        <h3 className="mt-[6px] h-[10px] leading-[10px]">Pathfinders:</h3>
        <div className="mt-[6px] flex h-3 items-center gap-[15px] pl-[5px]">
          {FINDERS.map(([name, art]) => (
            <button type="button" key={name} aria-label={name}>
              <Ico className="size-[10px]" box="0 0 12 12">{art}</Ico>
            </button>
          ))}
        </div>
      </div>
    </Panel>
  );
}

const ALIGNS = [
  ["Align left", "M0 1.500h10M0 3.500h7M0 5.500h10M0 7.500h7M0 9.500h9"],
  ["Align center", "M0 1.500h10M2 3.500h6M0 5.500h10M2 7.500h6M1 9.500h8"],
  ["Align right", "M0 1.500h10M3 3.500h7M0 5.500h10M3 7.500h7M1 9.500h9"],
  ["Justify left", "M0 1.500h10M0 3.500h10M0 5.500h10M0 7.500h10M0 9.500h6"],
  ["Justify center", "M0 1.500h10M0 3.500h10M0 5.500h10M0 7.500h10M2 9.500h6"],
  ["Justify right", "M0 1.500h10M0 3.500h10M0 5.500h10M0 7.500h10M4 9.500h6"],
  ["Justify all", "M0 1.500h10M0 3.500h10M0 5.500h10M0 7.500h10M0 9.500h10"],
];

function Indent({ label, d }) {
  return (
    <div className="flex items-center">
      <Ico className="mr-[3px] size-[11px]" box="0 0 12 12"><path d={d} strokeWidth="1" /></Ico>
      <Stepper label={`${label} step`} />
      <Field label={label} value="0 pt" className="ml-1 w-[41px]" />
    </div>
  );
}

function ParagraphPanel() {
  return (
    <Panel tabs={["Character", "Paragraph", "OpenType"]} active="Paragraph" className="w-[155px] pb-[4px]">
      <div className="flex justify-between px-[5px] pt-[6px]">
        {ALIGNS.map(([name, d], i) => (
          <button type="button" key={name} aria-label={name} className={clsx("grid size-[15px] place-items-center", i === 0 && "bg-[#2e2e2e]")}>
            <Ico className="size-[11px]" box="0 0 11 11"><path d={d} strokeWidth="1" /></Ico>
          </button>
        ))}
      </div>
      <div className="mt-[10px] grid grid-cols-2 gap-y-[6px] pl-[5px]">
        <Indent label="Left indent" d="M0 5h3M2 3l2 2-2 2M5 0v12M7 2h5M7 5h4M7 8h5M7 11h4" />
        <Indent label="Right indent" d="M0 2h5M1 5h4M0 8h5M1 11h4M7 0v12M12 5H8M10 3 8 5l2 2" />
        <Indent label="First line indent" d="M0 1h4M2 0v3M6 1h6M4 4h8M4 6h8M4 8h8M4 10h8" />
      </div>
      <div className="mt-[10px] grid grid-cols-2 pl-[5px]">
        <Indent label="Space before" d="M0 2h3M5 1h6v3H5zM4 7h8M4 9h6M4 11h8" />
        <Indent label="Space after" d="M5 1h6v6H5M0 10h3M4 9h8v2H4" />
      </div>
      <label className="mt-2 flex items-center gap-[3px] pl-1 font-semibold text-gray-100">
        <input type="checkbox" defaultChecked className="size-2 accent-[#dcdcdc]" />
        Hyphenate
      </label>
    </Panel>
  );
}

function Workspace() {
  return (
    <main className="flex flex-1">
      <div className="relative flex-1">
        <Checker />
        <Artboard />
        <ToolBox />
        <div className="absolute -top-2 right-1 flex flex-col items-end gap-[7px]">
          <div className="flex flex-col gap-[1px]">
            <SwatchesPanel />
            <ColorPanel />
          </div>
          <PathfinderPanel />
          <ParagraphPanel />
        </div>
        <Recorder />
      </div>
      <div className="flex w-[10px] flex-col items-center justify-between bg-[#474747] py-1 text-[#888]">
        <Chevron className="size-[6px] rotate-180" />
        <span className="h-4 w-2 rounded-full bg-[#5e5e5e]" />
        <Chevron className="size-[6px]" />
      </div>
    </main>
  );
}

/* ---------- status bar and taskbar ---------- */

function StatusBar() {
  return (
    <footer className="flex h-[11px] items-center bg-[#4a4a4a] text-[7px] text-gray-200">
      <button type="button" className="flex w-[52px] items-center justify-between pl-1 pr-2">
        66.67% <Chevron className="size-[6px]" />
      </button>
      <span className="flex gap-2 text-[#777]">
        <Ico className="size-[6px]" box="0 0 6 6"><path d="M1 0v6M5 0 2 3l3 3" strokeWidth="1" /></Ico>
        <Ico className="size-[6px]" box="0 0 6 6"><path d="M4 0 1 3l3 3" strokeWidth="1" /></Ico>
      </span>
      <button type="button" className="ml-1 flex w-[37px] items-center justify-between bg-[#434343] px-[2px] font-semibold">
        1 <Chevron className="size-[6px]" />
      </button>
      <span className="ml-2 flex gap-[6px] text-[#777]">
        <Ico className="size-[6px]" box="0 0 6 6"><path d="m2 0 3 3-3 3" strokeWidth="1" /></Ico>
        <Ico className="size-[6px]" box="0 0 6 6"><path d="m1 0 3 3-3 3M5 0v6" strokeWidth="1" /></Ico>
      </span>
      <span className="ml-[57px]">Selection</span>
      <svg viewBox="0 0 4 6" className="ml-[53px] h-[6px] w-1" fill="#ddd" aria-hidden="true"><path d="m0 0 4 3-4 3z" /></svg>
      <Ico className="ml-2 size-[6px] text-[#999]" box="0 0 6 6"><path d="M4 0 1 3l3 3" strokeWidth="1" /></Ico>
      <span className="ml-[474px] h-2 w-4 rounded-full bg-[#5e5e5e]" />
      <Ico className="ml-auto mr-3 size-[6px] text-[#999]" box="0 0 6 6"><path d="m2 0 3 3-3 3" strokeWidth="1" /></Ico>
    </footer>
  );
}

function AdobeTile({ text, className }) {
  return (
    <span className={clsx("grid size-[15px] place-items-center rounded-[3px] text-[8px] font-semibold leading-none", className)}>
      {text}
    </span>
  );
}

const APPS = [
  ["Task view", (
    <svg viewBox="0 0 16 16" className="size-[15px]"><path d="M6 1h9v11H6z" fill="#efefef" /><path d="M1 4h10v11H1z" fill="#333" /><path d="M5 4h6v7H5z" fill="#8a8a8a" /><path d="M1 11h13v4H1z" fill="#2b2b2b" /></svg>
  )],
  ["Chat", (
    <svg viewBox="0 0 16 16" className="size-4"><path d="M8 .5A7.500 7.500 0 1 1 4 14.300L.8 15.500 1.700 12A7.500 7.500 0 0 1 8 .5z" fill="#7472b8" /><path d="M4 5.500h5.500v5H4zM10 7.500l2.500-1.700v4.400L10 8.500z" fill="#fff" /></svg>
  )],
  ["File Explorer", (
    <svg viewBox="0 0 16 16" className="size-4"><path d="M0 1h6l2 2h8v10H0z" fill="#f2b51f" /><path d="M0 4.500h16V12H0z" fill="#ffd75e" /><path d="M0 11h16v4H0z" fill="#2c8ad6" /><path d="M4.500 10h7v2.500h-7z" fill="#1a6fb8" /></svg>
  )],
  ["WhatsApp", (
    <span className="grid size-[14px] place-items-center rounded-full bg-[#35c759] text-white"><FaWhatsapp className="size-[11px]" /></span>
  )],
  ["Edge", (
    <svg viewBox="0 0 16 16" className="size-4">
      <circle cx="8" cy="8" r="7.500" fill="#1a7fd0" />
      <path d="M.7 7C1.500 3 4.500.5 8 .5c5 0 7.500 3.500 7.500 6.500 0 2.500-2 3.500-3.500 3.500-2 0-2.500-1-2-2 .7-2-1-3.500-3-3.500-3 0-5 1-6.300 2z" fill="#3cc8b4" />
      <path d="M5 8c-.5 4 3 7 8 5-3 4-11 2-11-3 0-1.500 1.500-3 3-2z" fill="#0c4fa0" />
      <path d="M9 8.500c-1 2 1 3.500 3.500 3 1.500-.3 2.500-1 2.800-1.500C14 12 7 13 7 8.500z" fill="#fff" />
    </svg>
  )],
  ["Store", (
    <svg viewBox="0 0 16 16" className="size-4"><path d="M5 4V1.500h6V4" stroke="#1c6fb8" fill="none" strokeWidth="1.200" /><path d="M.5 4h15v10a1.500 1.500 0 0 1-1.500 1.500H2A1.500 1.500 0 0 1 .5 14z" fill="#1f4e79" /><path d="M5 6.500h2.500V9H5z" fill="#f25022" /><path d="M8.500 6.500H11V9H8.500z" fill="#7fba00" /><path d="M5 10h2.500v2.500H5z" fill="#00a4ef" /><path d="M8.500 10H11v2.500H8.500z" fill="#ffb900" /></svg>
  )],
  ["Acrobat", (
    <svg viewBox="0 0 16 16" className="size-[15px]"><rect width="16" height="16" rx="3" fill="#b30b00" /><path d="M3 12.500c3-2 5-5 5-9 0 4 2 6.500 5.500 7-4-.8-7-.3-10.500 2z" fill="none" stroke="#fff" strokeWidth="1.300" /></svg>
  )],
  ["Chrome", (
    <svg viewBox="0 0 18 18" className="size-[18px]">
      <circle cx="8.500" cy="10" r="7.500" fill="#fff" />
      <path d="M8.500 10 2 6.300A7.500 7.500 0 0 1 15 6.300z" fill="#db4437" />
      <path d="M8.500 10 2 6.300a7.500 7.500 0 0 0 5.500 11.200z" fill="#0f9d58" />
      <path d="M8.500 10 15 6.300A7.500 7.500 0 0 1 7.500 17.500z" fill="#ffcd40" />
      <circle cx="8.500" cy="10" r="3.600" fill="#fff" />
      <circle cx="8.500" cy="10" r="2.800" fill="#4285f4" />
      <path d="M17 0v8h-4l-2-3z" fill="#3d7fc4" />
      <path d="M10 4 17 0l-4 8z" fill="#eaf3fb" />
    </svg>
  )],
  ["InDesign", <AdobeTile key="id" text="Id" className="bg-[#49021f] text-[#ff3366]" />],
  ["Illustrator", <AdobeTile key="ai" text="Ai" className="border border-[#c4661b] bg-[#2c1000] text-[#ff9a00]" />],
  ["Photoshop", <AdobeTile key="ps" text="Ps" className="bg-[#001e36] text-[#31a8ff]" />],
  ["Recorder", (
    <svg viewBox="0 0 16 16" className="size-[15px]"><circle cx="7" cy="8" r="7" fill="#e8f6fd" /><circle cx="7" cy="8" r="5.500" fill="#2f9fe0" /><circle cx="5" cy="6" r="2.500" fill="#8fd4f5" /><path d="m12 8 3.500-3v6.500z" fill="#3bb4e8" /></svg>
  )],
];

function Taskbar() {
  return (
    <footer className="flex h-8 items-center bg-linear-to-r from-[#e0f0f8] via-[#d6e0f5] to-[#e4f0f8] text-[8px] text-[#222]">
      <div className="flex w-[30%] shrink-0 items-center gap-[5px] pl-3">
        <svg viewBox="0 0 16 16" className="size-4" aria-hidden="true">
          <path d="M10 1c4 3 6 8 2 12-3 3-9 2-11-2 6 1 11-4 9-10z" fill="#f0a63a" />
          <path d="M10 1c3 4 2 9-3 11-2 .6-4.500.4-6-1 6 1 11-4 9-10z" fill="#f8c765" />
        </svg>
        <div className="leading-[11px]">
          <div>31°C</div>
          <div className="text-[#555]">Clear</div>
        </div>
      </div>
      <button type="button" aria-label="Start" className="-ml-[2px]">
        <svg viewBox="0 0 16 16" className="size-4" fill="#0a84d8" aria-hidden="true">
          <path d="M0 0h7.600v7.600H0zM8.400 0H16v7.600H8.400z" fill="#2fa3e6" />
          <path d="M0 8.400h7.600V16H0zM8.400 8.400H16V16H8.400z" />
        </svg>
      </button>
      <label className="ml-2 flex h-[21px] w-[146px] shrink-0 items-center gap-[7px] rounded-full bg-[#f5fafd] pl-2 pr-[2px]">
        <Ico className="size-[10px]" box="0 0 10 10"><circle cx="4.300" cy="4.300" r="3.500" /><path d="m7 7 2.500 2.500" /></Ico>
        <input
          placeholder="Search"
          aria-label="Search"
          className="min-w-0 flex-1 bg-transparent text-[9px] outline-none placeholder:text-[#555]"
        />
        <svg viewBox="0 0 16 16" className="size-[15px]" fill="none" aria-hidden="true">
          <path d="M8 1a7 7 0 1 1-3.500 13L1 15l1-3.500A7 7 0 0 1 8 1z" stroke="#4aa6cf" fill="#e7f5fb" />
          <path d="M6 4v7l2 1 3-2V8.500L8 7.500" stroke="#2072b8" strokeWidth="1.400" />
        </svg>
      </label>
      <div className="grid h-full w-[354px] shrink-0 grid-cols-12 py-[3px]">
        {APPS.map(([name, art]) => (
          <button
            type="button"
            key={name}
            aria-label={name}
            className={clsx("relative mx-[2px] grid place-items-center rounded-sm", name === "Illustrator" && "bg-[#f3f7fc]")}
          >
            {art}
            {name === "Illustrator" && <span className="absolute bottom-0 h-[2px] w-[10px] rounded-full bg-[#2473a8]" />}
            {(name === "Chrome" || name === "Recorder") && <span className="absolute bottom-0 h-[2px] w-1 rounded-full bg-[#7b8794]" />}
          </button>
        ))}
      </div>
      <div className="ml-auto flex shrink-0 items-center pr-3">
        <Chevron className="size-2 rotate-180" />
        <svg viewBox="0 0 12 12" className="ml-3 size-3" fill="#8a5f9e" aria-hidden="true">
          <path d="M11.500 1 9 6 1 11 4 6z" />
          <path d="M1 11 11 1" stroke="#d7b9dd" strokeWidth=".7" />
        </svg>
        <Ico className="ml-[10px] size-[11px] text-[#3c6b94]" box="0 0 12 12">
          <rect x="4" y="1" width="4" height="6.500" rx="2" fill="#a9cdea" />
          <path d="M2 5.500c0 5 8 5 8 0M6 9.500V12" />
        </Ico>
        <div className="ml-[11px] text-center leading-[11px]">
          <div>ENG</div>
          <div>US</div>
        </div>
        <Ico className="ml-[11px] h-[10px] w-3" box="0 0 12 10">
          <path d="M.5 3.500c3-3.500 8-3.500 11 0M2.500 5.700c2-2.300 5-2.300 7 0M4.300 7.600c1-1.200 2.400-1.200 3.400 0" strokeWidth="1" />
          <circle cx="6" cy="8.700" r=".9" fill="currentColor" stroke="none" />
        </Ico>
        <Ico className="ml-[5px] size-[11px]" box="0 0 12 12">
          <path d="M.5 4.500h2l3-2.500v8l-3-2.500h-2zM7.300 4.500c.7 1 .7 2 0 3M9 3c1.500 2 1.500 4 0 6M10.500 1.700c2 3 2 5.600 0 8.600" strokeWidth=".9" />
        </Ico>
        <Ico className="ml-[5px] h-[9px] w-3" box="0 0 12 9">
          <path {...F} d="M2 3h8.500v5H2zM11 4.500h1v2h-1zM0 1h4v3L2 6 0 4z" />
        </Ico>
        <div className="ml-[9px] text-right leading-[11px]">
          <div>01:07</div>
          <div>18/09/2023</div>
        </div>
        <Ico className="ml-[6px] size-[10px]" box="0 0 12 12">
          <path {...F} d="M2 8.500V5a4 4 0 0 1 5-4v4h4v3.500l1 1H1zM4.500 10.500h3L6 12z" />
          <path d="M8.500 1H12L8.500 4H12" strokeWidth="1" />
        </Ico>
      </div>
    </footer>
  );
}

export default function App() {
  return (
    <div className="flex min-h-screen flex-col border-x border-black bg-[#535353] font-['Open_Sans','Noto_Sans',sans-serif]">
      <MenuBar />
      <ControlBar />
      <TabBar />
      <Workspace />
      <StatusBar />
      <Taskbar />
    </div>
  );
}
